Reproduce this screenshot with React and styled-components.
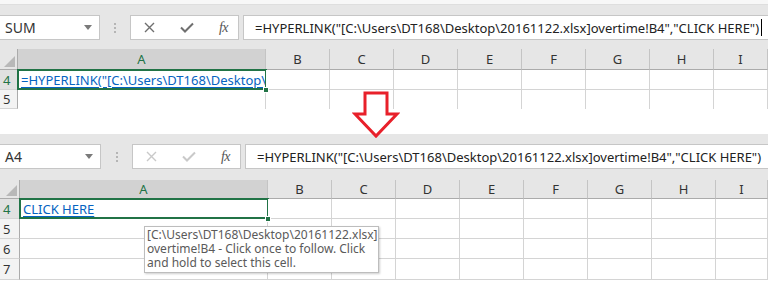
import React from 'react';
import styled, { createGlobalStyle } from 'styled-components';

const Global = createGlobalStyle`
  html, body { margin: 0; padding: 0; background: #fff; }
  body { font-family: "Noto Sans", "Open Sans", sans-serif; }
  * { box-sizing: border-box; }
`;

const Page = styled.div`
  position: relative;
  width: 768px;
  height: 281px;
  overflow: hidden;
  background: #fff;
`;

const TopStrip = styled.div`
  height: 5px;
  background: #f7f7f7;
  border-bottom: 1px solid #dedede;
`;

const Bar = styled.div`
  display: grid;
  grid-template-columns: ${p => p.$nameW}px ${p => p.$sepW}px 109px 1fr;
  align-items: stretch;
  background: #e6e6e6;
  height: ${p => p.$h}px;
  padding: ${p => p.$pt}px 0 ${p => p.$pb}px 0;
`;

const NameBox = styled.div`
  display: flex;
  align-items: center;
  justify-content: space-between;
  background: #fff;
  border: 1px solid #c6c6c6;
  border-left: none;
  padding: 0 7px 0 5px;
  font-size: 14px;
  color: #333;
`;

const Caret = styled.span`
  width: 0;
  height: 0;
  border-left: 4px solid transparent;
  border-right: 4px solid transparent;
  border-top: 5px solid #7a7a7a;
`;

const Sep = styled.div`
  display: flex;
  justify-content: center;
  align-items: center;
`;

const Dots = styled.div`
  display: flex;
  flex-direction: column;
  gap: 2px;
  & > span {
    width: 2px;
    height: 2px;
    background: #b5b5b5;
  }
`;

const Buttons = styled.div`
  display: flex;
  justify-content: space-between;
  align-items: center;
  background: #fff;
  border: 1px solid #c6c6c6;
  padding: 0 10px 0 13px;
`;

const Fx = styled.span`
  font-family: "Liberation Serif", "DejaVu Serif", serif;
  font-style: italic;
  font-size: 14px;
  color: #555;
  letter-spacing: -0.5px;
`;

const Formula = styled.div`
  display: flex;
  align-items: center;
  background: #fff;
  border: 1px solid #c6c6c6;
  border-right: none;
  padding-left: 11px;
  font-size: 13px;
  color: #222;
  white-space: nowrap;
  overflow: hidden;
  margin-left: 4px;
`;

const Caret2 = styled.span`
  display: inline-block;
  width: 1px;
  height: 17px;
  background: #000;
  margin-left: 2px;
`;

const Grid = styled.div`
  position: relative;
  display: flex;
  flex-direction: column;
`;

const Row = styled.div`
  display: grid;
  grid-template-columns: ${p => p.$rh}px 248px repeat(7, 64px) 1fr;
  height: ${p => p.$h}px;
`;

const HeadCell = styled.div`
  display: flex;
  align-items: center;
  justify-content: center;
  background: ${p => (p.$sel ? '#d2d2d2' : '#e6e6e6')};
  color: ${p => (p.$sel ? '#217346' : '#333')};
  border-right: 1px solid #c4c4c4;
  border-bottom: 1px solid #ababab;
  font-size: 13px;
`;

const Corner = styled.div`
  position: relative;
  background: #e6e6e6;
  border-right: 1px solid #ababab;
  border-bottom: 1px solid #ababab;
  & > svg { position: absolute; right: 2px; bottom: 2px; }
`;

const RowHead = styled.div`
  display: flex;
  align-items: center;
  padding-left: 3px;
  background: ${p => (p.$sel ? '#e1e1e1' : '#f3f3f3')};
  color: ${p => (p.$sel ? '#217346' : '#333')};
  border-right: 1px solid #ababab;
  border-bottom: 1px solid #d4d4d4;
  font-size: 13px;
`;

const Cell = styled.div`
  position: relative;
  display: flex;
  align-items: center;
  background: #fff;
  border-right: 1px solid #d4d4d4;
  border-bottom: ${p => (p.$last ? 'none' : '1px solid #d4d4d4')};
  padding-left: 3px;
  font-size: 13px;
  white-space: nowrap;
  min-width: 0;
  ${p =>
    p.$sel &&
    `
    overflow: visible;
    &::after {
      content: '';
      position: absolute;
      left: -1px; top: -1px; right: -2px; bottom: -1px;
      border: 2px solid #217346;
      pointer-events: none;
    }
  `}
`;

const Clip = styled.div`
  overflow: hidden;
  width: 100%;
`;

const Link = styled.span`
  color: #0563c1;
  text-decoration: underline;
  text-underline-offset: 2px;
`;

const Handle = styled.span`
  position: absolute;
  right: -4px;
  bottom: -4px;
  width: 6px;
  height: 6px;
  background: #217346;
  border: 1px solid #fff;
  z-index: 2;
`;

const Gap = styled.div`
  height: 25px;
`;

const Tooltip = styled.div`
  position: absolute;
  left: 144px;
  top: 46px;
  width: 235px;
  background: #fff;
  border: 1px solid #bdbdbd;
  box-shadow: 1px 1px 2px rgba(0, 0, 0, 0.2);
  padding: 1px 2px 2px 2px;
  font-size: 12px;
  line-height: 14px;
  color: #5a5a5a;
  z-index: 3;
`;

const Arrow = styled.svg`
  position: absolute;
  left: 352px;
  top: 91px;
`;

const cols = ['B', 'C', 'D', 'E', 'F', 'G', 'H', 'I'];

function XIcon({ color }) {
  return (
    <svg width="11" height="11" viewBox="0 0 11 11">
      <path d="M1 1 L10 10 M10 1 L1 10" stroke={color} strokeWidth="1.4" fill="none" />
    </svg>
  );
}

function CheckIcon({ color }) {
  return (
    <svg width="14" height="11" viewBox="0 0 14 11">
      <path d="M1 5.5 L5 9.5 L13 1.5" stroke={color} strokeWidth="2" fill="none" />
    </svg>
  );
}

function FormulaBar({ name, disabled, nameW, sepW, h, pt, pb, cursor }) {
  const ic = disabled ? '#c9c9c9' : '#6f6f6f';
  return (
    <Bar $nameW={nameW} $sepW={sepW} $h={h} $pt={pt} $pb={pb}>
      <NameBox>
        <span>{name}</span>
        <Caret />
      </NameBox>
      <Sep>
        <Dots>
          <span />
          <span />
          <span />
        </Dots>
      </Sep>
      <Buttons>
        <XIcon color={ic} />
        <CheckIcon color={ic} />
        <Fx>fx</Fx>
      </Buttons>
      <Formula>
        =HYPERLINK("[C:\Users\DT168\Desktop\20161122.xlsx]overtime!B4","CLICK HERE")
        {cursor && <Caret2 />}
      </Formula>
    </Bar>
  );
}

function HeaderRow({ rh, h }) {
  return (
    <Row $rh={rh} $h={h}>
      <Corner>
        <svg width="11" height="11" viewBox="0 0 11 11">
          <polygon points="11,0 11,11 0,11" fill="#b8b8b8" />
        </svg>
      </Corner>
      <HeadCell $sel>A</HeadCell>
      {cols.map(c => (
        <HeadCell key={c}>{c}</HeadCell>
      ))}
    </Row>
  );
}

function DataRow({ rh, h, n, sel, content, last }) {
  return (
    <Row $rh={rh} $h={h}>
      <RowHead $sel={sel}>{n}</RowHead>
      <Cell $sel={sel} $last={last}>
        {content && <Clip>{content}</Clip>}
        {sel && <Handle />}
      </Cell>
      {cols.map(c => (
        <Cell key={c} $last={last} />
      ))}
    </Row>
  );
}

export default function App() {
  return (
    <Page>
      <Global />
      <TopStrip />
      <FormulaBar name="SUM" nameW={100} sepW={30} h={44} pt={10} pb={9} cursor />
      <Grid>
        <HeaderRow rh={18} h={21} />
        <DataRow
          rh={18}
          h={20}
          n="4"
          sel
          content={<Link>=HYPERLINK("[C:\Users\DT168\Desktop\20161122.xlsx]overtime!B4","CLICK HERE")</Link>}
        />
        <DataRow rh={18} h={19} n="5" last />
      </Grid>
      <Gap />
      <FormulaBar name="A4" disabled nameW={101} sepW={31} h={46} pt={10} pb={11} />
      <Grid>
        <HeaderRow rh={20} h={19} />
        <DataRow rh={20} h={20} n="4" sel content={<Link>CLICK HERE</Link>} />
        <DataRow rh={20} h={20} n="5" />
        <DataRow rh={20} h={20} n="6" />
        <DataRow rh={20} h={21} n="7" />
        <Tooltip>
          [C:\Users\DT168\Desktop\20161122.xlsx]
          <br />
          overtime!B4 - Click once to follow. Click
          <br />
          and hold to select this cell.
        </Tooltip>
      </Grid>
      <Arrow width="48" height="48" viewBox="0 0 48 48">
        <polygon
          points="13,2 35,2 35,23 45,23 24,45 3,23 13,23"
          fill="#fff"
          stroke="#e8202a"
          strokeWidth="3"
        />
      </Arrow>
    </Page>
  );
}
